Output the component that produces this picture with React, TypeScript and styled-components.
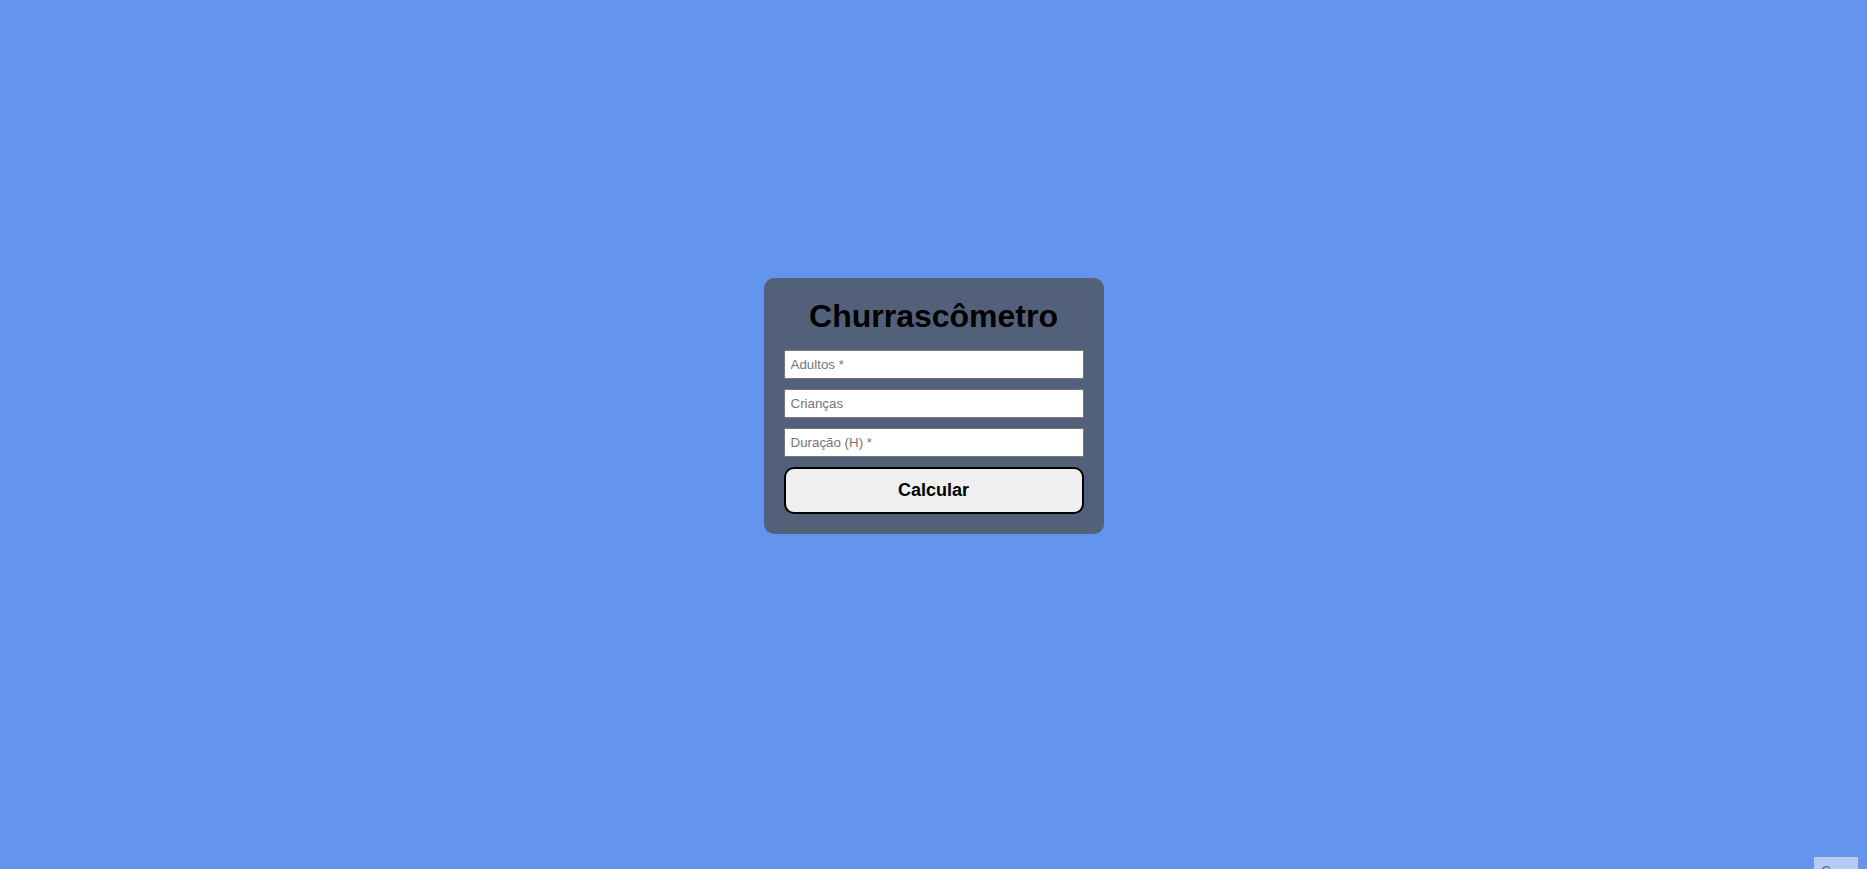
import React from "react";
import styled, { createGlobalStyle } from "styled-components";

const GlobalStyle = createGlobalStyle`
  html, body {
    margin: 0;
    padding: 0;
    background-color: cornflowerblue;
    font-family: "Liberation Sans", Arial, sans-serif;
  }
`;

const Page = styled.main`
  display: flex;
  align-items: center;
  justify-content: center;
  min-height: 100vh;
  padding-bottom: 57px;
  box-sizing: border-box;
`;

const Card = styled.form`
  display: flex;
  flex-direction: column;
  width: 340px;
  padding: 20px;
  box-sizing: border-box;
  background-color: #536079;
  border-radius: 10px;
`;

const Title = styled.h1`
  margin: 0 0 15px;
  font-size: 32px;
  font-weight: bold;
  text-align: center;
  color: #000;
`;

const Field = styled.input`
  height: 29px;
  margin-bottom: 10px;
  padding: 0 6px;
  box-sizing: border-box;
  border: 1px solid #767676;
  background: #fff;
  font-family: "Liberation Sans", Arial, sans-serif;
  font-size: 13.33px;
  color: #000;

  &::placeholder {
    color: #757575;
  }
`;

const SubmitButton = styled.button`
  height: 47px;
  border: 2px solid #000;
  border-radius: 10px;
  background-color: #efefef;
  font-family: "Liberation Sans", Arial, sans-serif;
  font-size: 18px;
  font-weight: bold;
  color: #000;
  cursor: pointer;
`;

const ResultBox = styled.div`
  position: fixed;
  top: 856px;
  right: 8px;
  width: 46px;
  height: 40px;
  padding: 6px 7px;
  box-sizing: border-box;
  background-color: #b3cbf6;
  border: 1px solid #7d95c4;
  font-size: 14px;
  color: #5a6f99;
`;

const App: React.FC = () => {
  const [adults, setAdults] = React.useState("");
  const [kids, setKids] = React.useState("");
  const [hours, setHours] = React.useState("");

  return (
    <>
      <GlobalStyle />
      <Page>
        <Card onSubmit={(e) => e.preventDefault()}>
          <Title>Churrascômetro</Title>
          <Field
            type="number"
            placeholder="Adultos *"
            value={adults}
            onChange={(e) => setAdults(e.target.value)}
          />
          <Field
            type="number"
            placeholder="Crianças"
            value={kids}
            onChange={(e) => setKids(e.target.value)}
          />
          <Field
            type="number"
            placeholder="Duração (H) *"
            value={hours}
            onChange={(e) => setHours(e.target.value)}
          />
          <SubmitButton type="submit">Calcular</SubmitButton>
        </Card>
      </Page>
      <ResultBox>C</ResultBox>
    </>
  );
};

export default App;
